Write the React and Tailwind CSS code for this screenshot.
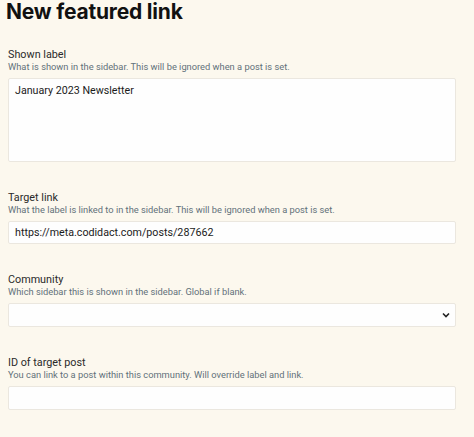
import React from 'react';

function Field({ label, help, children, className = '' }) {
  return (
    <div className={className}>
      <div className="text-[10.8px] leading-[13px] text-[#2a2a2a]">{label}</div>
      <div className="text-[9.3px] leading-[12px] text-[#62717a]">{help}</div>
      <div className="mt-[5px]">{children}</div>
    </div>
  );
}

export default function App() {
  const box = 'w-full bg-[#fefefe] border border-[#ebe7df] rounded-[2px] px-[6px] text-[10.7px] text-[#1b1b1b] outline-none';
  return (
    <div className="w-[474px] h-[437px] overflow-hidden bg-[#fcf8ee]" style={{ fontFamily: 'Roboto, "Liberation Sans", sans-serif' }}>
      <h1 className="pl-[6px] pt-[1px] text-[21px] leading-[21px] font-bold text-[#111]" style={{ fontFamily: 'Inter, "Liberation Sans", sans-serif', letterSpacing: '-0.2px' }}>
        New featured link
      </h1>

      <div className="pl-[8px] pr-[18px]">
        <Field label="Shown label" help="What is shown in the sidebar. This will be ignored when a post is set." className="mt-[26px]">
          <textarea className={`${box} h-[84px] pt-[5px] leading-[13px] resize-none block`} defaultValue="January 2023 Newsletter" />
        </Field>

        <Field label="Target link" help="What the label is linked to in the sidebar. This will be ignored when a post is set." className="mt-[29px]">
          <input className={`${box} h-[23px] block`} defaultValue="https://meta.codidact.com/posts/287662" />
        </Field>

        <Field label="Community" help="Which sidebar this is shown in the sidebar. Global if blank." className="mt-[29px]">
          <div className={`${box} h-[24px] flex items-center justify-end pr-[5px]`}>
            <svg width="8" height="6" viewBox="0 0 8 6">
              <path d="M1 1.5 L4 4.5 L7 1.5" fill="none" stroke="#222" strokeWidth="1.6" />
            </svg>
          </div>
        </Field>

        <Field label="ID of target post" help="You can link to a post within this community. Will override label and link." className="mt-[29px]">
          <input className={`${box} h-[24px] block`} defaultValue="" />
        </Field>
      </div>
    </div>
  );
}
